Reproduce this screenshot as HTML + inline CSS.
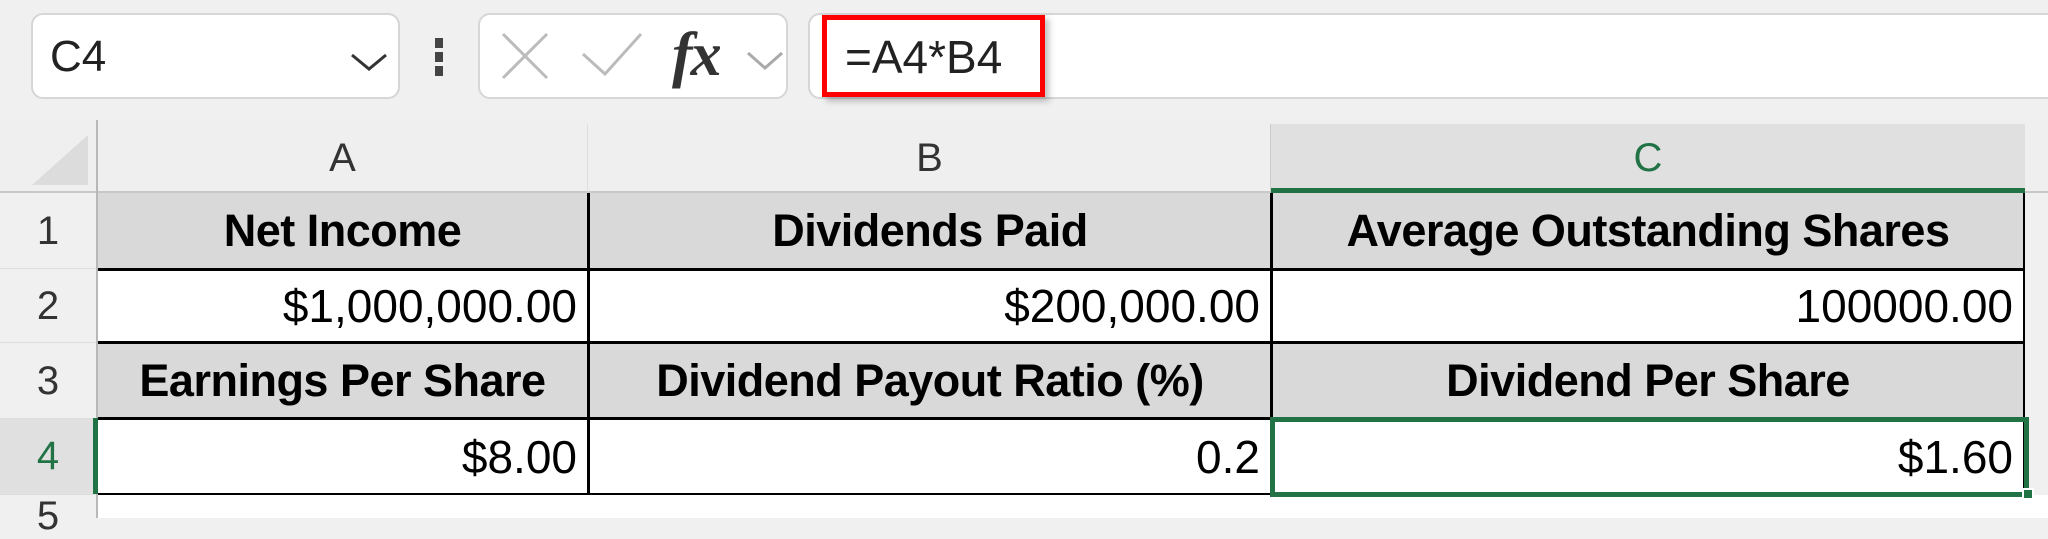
<!DOCTYPE html>
<html><head><meta charset="utf-8"><style>
*{margin:0;padding:0;box-sizing:border-box}
body{width:2048px;height:518px;background:#f0f0f0;position:relative;overflow:hidden;font-family:"Liberation Sans",Arial,sans-serif}
.abs{position:absolute}
.box{position:absolute;background:#fff;border:2px solid #d6d6d6;border-radius:12px}
.cell{position:absolute;display:flex;align-items:center;font-size:46px;color:#000;white-space:nowrap}
.hd{background:#d9d9d9;font-weight:bold;justify-content:center;font-size:45px;letter-spacing:-0.5px}
.val{background:#fff;justify-content:flex-end;padding-right:10px}
.ch{position:absolute;top:124px;height:68px;display:flex;align-items:center;justify-content:center;font-size:40px;color:#333}
.rh{position:absolute;left:0;width:96px;display:flex;align-items:center;justify-content:center;font-size:40px;color:#333}
</style></head><body>
<!-- toolbar -->
<div class="box" style="left:31px;top:13px;width:369px;height:86px"></div>
<div class="abs" style="left:50px;top:32px;font-size:44px;color:#222">C4</div>
<svg class="abs" style="left:350px;top:52px" width="38" height="20"><path d="M2 3 L19 17 L36 3" stroke="#333" stroke-width="3" fill="none"/></svg>
<div class="abs" style="left:435px;top:38px;width:8px;height:10px;background:#444"></div>
<div class="abs" style="left:435px;top:52px;width:8px;height:10px;background:#444"></div>
<div class="abs" style="left:435px;top:66px;width:8px;height:10px;background:#444"></div>
<div class="box" style="left:478px;top:13px;width:310px;height:86px"></div>
<svg class="abs" style="left:500px;top:32px" width="50" height="48"><path d="M3 2 L47 46 M47 2 L3 46" stroke="#bbb" stroke-width="3" fill="none"/></svg>
<svg class="abs" style="left:581px;top:32px" width="62" height="44"><path d="M2 22 L24 42 L60 2" stroke="#bbb" stroke-width="3" fill="none"/></svg>
<div class="abs" style="left:672px;top:20px;font-family:'Liberation Serif',serif;font-style:italic;font-weight:bold;font-size:62px;color:#333;letter-spacing:-2px">fx</div>
<svg class="abs" style="left:746px;top:50px" width="38" height="22"><path d="M2 3 L19 18 L36 3" stroke="#aaa" stroke-width="3" fill="none"/></svg>
<div class="box" style="left:808px;top:13px;width:1300px;height:86px;border-right:none"></div>
<div class="abs" style="left:822px;top:15px;width:223px;height:82px;border:5px solid #f00;box-shadow:4px 4px 6px rgba(0,0,0,0.25);background:#fff"></div>
<div class="abs" style="left:845px;top:30px;font-size:46px;color:#222">=A4*B4</div>
<!-- grid header -->
<div class="abs" style="left:0;top:120px;width:2048px;height:73px;background:#efefef"></div>
<div class="abs" style="left:1271px;top:124px;width:754px;height:68px;background:#e0e0e0"></div>
<div class="abs" style="left:0;top:191px;width:2048px;height:2px;background:#c8c8c8"></div>
<div class="abs" style="left:96px;top:120px;width:2px;height:398px;background:#b8b8b8"></div>
<div class="abs" style="left:587px;top:124px;width:1px;height:68px;background:#ddd"></div>
<div class="abs" style="left:1270px;top:124px;width:1px;height:68px;background:#ccc"></div>
<svg class="abs" style="left:32px;top:135px" width="56" height="50"><path d="M56 0 L56 50 L0 50 Z" fill="#dcdcdc"/></svg>
<div class="ch" style="left:98px;width:489px">A</div>
<div class="ch" style="left:588px;width:683px">B</div>
<div class="ch" style="left:1271px;width:754px;color:#217346">C</div>
<div class="abs" style="left:1271px;top:188px;width:754px;height:5px;background:#217346"></div>
<!-- row headers -->
<div class="rh" style="top:193px;height:76px">1</div>
<div class="rh" style="top:270px;height:72px">2</div>
<div class="rh" style="top:344px;height:74px">3</div>
<div class="rh" style="top:418px;height:76px;background:#e0e0e0;color:#217346">4</div>
<div class="rh" style="top:496px;height:40px">5</div>
<div class="abs" style="left:0;top:268px;width:96px;height:1px;background:#ddd"></div>
<div class="abs" style="left:0;top:342px;width:96px;height:1px;background:#ddd"></div>
<div class="abs" style="left:0;top:418px;width:96px;height:1px;background:#ddd"></div>
<div class="abs" style="left:0;top:494px;width:96px;height:1px;background:#ddd"></div>
<div class="abs" style="left:93px;top:418px;width:5px;height:76px;background:#217346"></div>
<!-- cells -->
<div class="abs" style="left:98px;top:193px;width:1927px;height:302px;background:#000"></div>
<div class="cell hd" style="left:98px;top:193px;width:489px;height:75px">Net Income</div>
<div class="cell hd" style="left:590px;top:193px;width:680px;height:75px">Dividends Paid</div>
<div class="cell hd" style="left:1273px;top:193px;width:750px;height:75px">Average Outstanding Shares</div>
<div class="cell val" style="left:98px;top:271px;width:489px;height:70px">$1,000,000.00</div>
<div class="cell val" style="left:590px;top:271px;width:680px;height:70px">$200,000.00</div>
<div class="cell val" style="left:1273px;top:271px;width:750px;height:70px">100000.00</div>
<div class="cell hd" style="left:98px;top:344px;width:489px;height:73px">Earnings Per Share</div>
<div class="cell hd" style="left:590px;top:344px;width:680px;height:73px">Dividend Payout Ratio (%)</div>
<div class="cell hd" style="left:1273px;top:344px;width:750px;height:73px">Dividend Per Share</div>
<div class="cell val" style="left:98px;top:420px;width:489px;height:73px">$8.00</div>
<div class="cell val" style="left:590px;top:420px;width:680px;height:73px">0.2</div>
<div class="cell val" style="left:1273px;top:420px;width:750px;height:73px">$1.60</div>
<div class="abs" style="left:98px;top:495px;width:1950px;height:23px;background:#fff"></div>
<div class="abs" style="left:1270px;top:417px;width:759px;height:80px;border:5px solid #217346"></div>
<div class="abs" style="left:2022px;top:488px;width:12px;height:12px;background:#217346;border:2px solid #fff"></div>
</body></html>
